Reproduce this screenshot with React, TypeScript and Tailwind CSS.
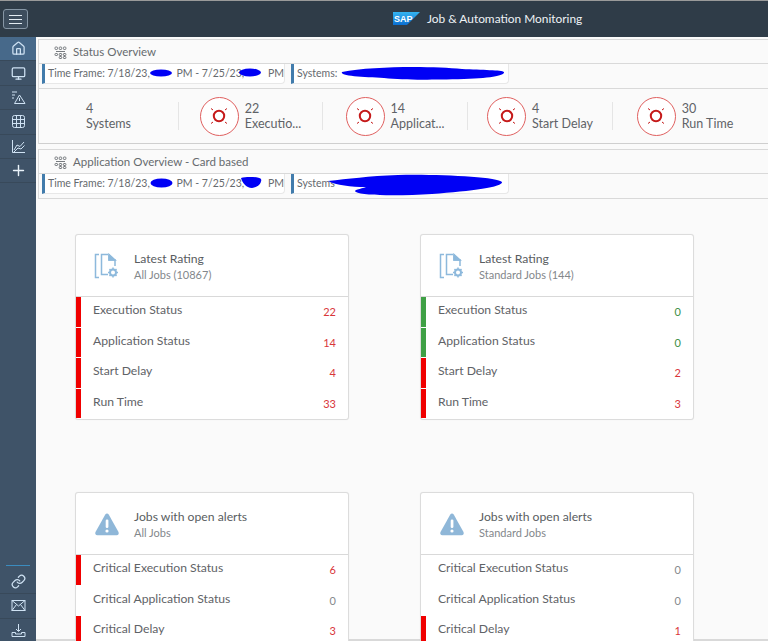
import { Home, Monitor, Plus, Link } from "lucide-react";

type Row = { label: string; value: number; status: "red" | "green" | "none" };

const ratingAll: Row[] = [
  { label: "Execution Status", value: 22, status: "red" },
  { label: "Application Status", value: 14, status: "red" },
  { label: "Start Delay", value: 4, status: "red" },
  { label: "Run Time", value: 33, status: "red" },
];
const ratingStandard: Row[] = [
  { label: "Execution Status", value: 0, status: "green" },
  { label: "Application Status", value: 0, status: "green" },
  { label: "Start Delay", value: 2, status: "red" },
  { label: "Run Time", value: 3, status: "red" },
];
const alertsAll: Row[] = [
  { label: "Critical Execution Status", value: 6, status: "red" },
  { label: "Critical Application Status", value: 0, status: "none" },
  { label: "Critical Delay", value: 3, status: "red" },
];
const alertsStandard: Row[] = [
  { label: "Critical Execution Status", value: 0, status: "none" },
  { label: "Critical Application Status", value: 0, status: "none" },
  { label: "Critical Delay", value: 1, status: "red" },
];

function GroupIcon() {
  return (
    <svg width="13" height="13" viewBox="0 0 13 13" fill="none" stroke="#777b7f" strokeWidth="1" className="shrink-0">
      <rect x="1" y="1" width="2.500" height="2.500" rx=".8" />
      <rect x="5.200" y="1" width="2.500" height="2.500" rx=".8" />
      <rect x="9.400" y="1" width="2.500" height="2.500" rx=".8" />
      <path d="M2 5.500h9" />
      <rect x="1" y="7.500" width="2.500" height="2" rx=".6" />
      <rect x="5.200" y="7.500" width="2.500" height="2" rx=".6" />
      <rect x="9.400" y="7.500" width="2.500" height="2" rx=".6" />
      <rect x="5.200" y="10.500" width="2.500" height="2" rx=".6" />
      <rect x="9.400" y="10.500" width="2.500" height="2" rx=".6" />
    </svg>
  );
}

function TargetIcon() {
  return (
    <div className="flex h-[39px] w-[39px] shrink-0 items-center justify-center rounded-full border border-[#e0605f] bg-white">
      <svg width="18" height="18" viewBox="0 0 18 18" fill="none" stroke="#c51a1a">
        <circle cx="9" cy="9" r="5.200" strokeWidth="2" />
        <path d="M1 1.500 3 3M17 1.500 15 3M1 16.500 3 15M17 16.500 15 15" strokeWidth="1" />
      </svg>
    </div>
  );
}

function Kpi({ value, label, alert }: { value: number; label: string; alert?: boolean }) {
  return (
    <div className="flex items-center justify-center gap-[6px]">
      {alert && <TargetIcon />}
      <div className="flex flex-col text-[12.500px] leading-[15px] text-[#5f6367]">
        <span>{value}</span>
        <span className="whitespace-nowrap">{label}</span>
      </div>
    </div>
  );
}

function Chips({ second }: { second: string }) {
  return (
    <div className="flex h-[25px] gap-[6px] border-b border-[#d9d9d9] pl-[3px]">
      <div className="flex h-[20px] w-[243px] items-center rounded-br-sm border-b border-r border-[#e8e8e8] border-l-[3px] border-l-[#427cac] bg-white pl-[3px] text-[10.500px] whitespace-nowrap text-[#666a6e]">
        <span>Time Frame: 7/18/23,</span>
        <span className="w-[27px]" />
        <span>PM - 7/25/23,</span>
        <span className="w-[24px]" />
        <span>PM</span>
      </div>
      <div className="flex h-[20px] w-[218px] items-center rounded-br-sm border-b border-r border-[#e8e8e8] border-l-[3px] border-l-[#427cac] bg-white pl-[3px] text-[10.500px] text-[#666a6e]">
        {second}
      </div>
    </div>
  );
}

function Title({ text }: { text: string }) {
  return (
    <div className="flex h-[24px] items-center gap-[6px] border-b border-[#d9d9d9] pt-[1px] pl-[15px] text-[11.500px] text-[#666a6e]">
      <GroupIcon />
      <span>{text}</span>
    </div>
  );
}

function DocIcon() {
  return (
    <svg width="26" height="26" viewBox="0 0 26 26" fill="none" stroke="#8db9dc" strokeWidth="1.500" className="shrink-0">
      <path d="M5 1.500H1.500V24.500H5" />
      <path d="M14 1.500H7.500V21.500H14" />
      <path d="M15 1.500V7H21V13" />
      <path d="M15 1.500 21 7H15Z" fill="#8db9dc" />
      <circle cx="19" cy="19.500" r="3" strokeWidth="2" />
      <path d="M19 14.500V16M19 23V24.500M14 19.500H15.500M22.500 19.500H24M15.500 16 16.500 17M21.500 22 22.500 23M22.500 16 21.500 17M16.500 22 15.500 23" />
    </svg>
  );
}

function AlertIcon() {
  return (
    <svg width="26" height="24" viewBox="0 0 26 24" className="shrink-0">
      <path d="M13 1.500c.7 0 1.300.4 1.700 1l9.800 17.600c.8 1.500-.2 3.200-1.800 3.200H3.300c-1.600 0-2.600-1.700-1.800-3.200L11.300 2.500c.4-.6 1-1 1.700-1Z" fill="#8fb7d8" />
      <rect x="11.700" y="7.500" width="2.700" height="8.500" rx="1.200" fill="#fff" />
      <circle cx="13" cy="19" r="1.600" fill="#fff" />
    </svg>
  );
}

function Card({ icon, title, sub, rows }: { icon: React.ReactNode; title: string; sub: string; rows: Row[] }) {
  return (
    <div className="rounded-[3px] border border-[#dcdcdc] bg-white shadow-[0_0_1px_rgba(0,0,0,0.1)]">
      <div className="flex h-[62px] items-center gap-[14px] border-b border-[#d9d9d9] pl-[18px]">
        <div className="flex w-[26px] justify-center">{icon}</div>
        <div className="flex flex-col">
          <span className="text-[12.200px] leading-[17px] text-[#595d61]">{title}</span>
          <span className="mt-[1px] text-[11px] leading-[14px] text-[#83878b]">{sub}</span>
        </div>
      </div>
      {rows.map((r) => (
        <div key={r.label} className="flex h-[30.500px]">
          <div
            className={
              "mb-[1px] w-[5px] shrink-0 " +
              (r.status === "red" ? "bg-[#f00000]" : r.status === "green" ? "bg-[#3fa045]" : "")
            }
          />
          <div className="flex flex-1 justify-between px-[12px]">
            <span className="mt-[4px] text-[12.200px] leading-[17px] text-[#5f6367]">{r.label}</span>
            <span
              className={
                "mt-[6px] text-[11px] leading-[17px] " +
                (r.status === "red" ? "text-[#d9363a]" : r.status === "green" ? "text-[#3f8f45]" : "text-[#85898d]")
              }
            >
              {r.value}
            </span>
          </div>
        </div>
      ))}
    </div>
  );
}

function NavIcon({ children, active }: { children: React.ReactNode; active?: boolean }) {
  return (
    <div className={"flex h-[24.400px] items-center justify-center border-b border-[#38495a] " + (active ? "bg-[#47698a]" : "")}>
      {children}
    </div>
  );
}

export default function App() {
  const navIcon = "h-[15px] w-[15px] text-[#cfe2f3]";
  return (
    <div className="relative flex h-[641px] w-[768px] flex-col overflow-hidden bg-[#fafafa] font-['Lato',sans-serif]">
      <header className="relative flex h-[37px] shrink-0 items-center border-t border-[#9a9a9a] bg-[#2f3c48] pl-[3px]">
        <button className="flex h-[20px] w-[25px] flex-col items-center justify-center gap-[3px] rounded-[3px] border border-[#8696a5] bg-[#3d4d5d]">
          <span className="h-[1px] w-[13px] bg-[#e3ecf3]" />
          <span className="h-[1px] w-[13px] bg-[#e3ecf3]" />
          <span className="h-[1px] w-[13px] bg-[#e3ecf3]" />
        </button>
        <div className="ml-[365px] flex items-center gap-[7px]">
          <svg width="27" height="13" viewBox="0 0 27 13">
            <defs>
              <linearGradient id="sapBlue" x1="0" y1="0" x2="0" y2="1">
                <stop offset="0" stopColor="#35b4f0" />
                <stop offset="1" stopColor="#0a6ed1" />
              </linearGradient>
            </defs>
            <path d="M0 0H27L14 13H0Z" fill="url(#sapBlue)" />
            <text x="1" y="9.500" fontSize="9" fontWeight="700" fontFamily="Liberation Sans" fill="#fff">SAP</text>
          </svg>
          <span className="text-[11.900px] text-[#eef2f5]">Job &amp; Automation Monitoring</span>
        </div>
      </header>

      <div className="flex min-h-0 flex-1">
        <aside className="flex w-[36px] shrink-0 flex-col justify-between bg-[#3f5368]">
          <nav>
            <NavIcon active><Home className={navIcon} /></NavIcon>
            <NavIcon><Monitor className={navIcon} /></NavIcon>
            <NavIcon>
              <svg width="15" height="15" viewBox="0 0 15 15" fill="none" stroke="#cfe2f3">
                <path d="M1 2h5M1 5h3M1 8h2" />
                <path d="M8.500 5 14 13.500H3.500Z" />
                <path d="M8.500 8v3" />
              </svg>
            </NavIcon>
            <NavIcon>
              <svg width="15" height="15" viewBox="0 0 15 15" fill="none" stroke="#cfe2f3">
                <rect x="1.500" y="1.500" width="12" height="12" rx="2" />
                <path d="M1.500 5.500h12M1.500 9.500h12M5.500 1.500v12M9.500 1.500v12" />
              </svg>
            </NavIcon>
            <NavIcon>
              <svg width="15" height="15" viewBox="0 0 15 15" fill="none" stroke="#cfe2f3">
                <path d="M1.500 1v12.500H14" />
                <path d="M3 11 6 6l3 1.500L13 3M3 13l4-4 3 1 3.500-3.500" />
              </svg>
            </NavIcon>
            <NavIcon><Plus className="h-[17px] w-[17px] text-[#eaf3fa]" /></NavIcon>
          </nav>
          <div className="-mb-[2px]">
            <div className="mx-[6px] h-[1px] bg-[#3b8cbf]" />
            <div className="mt-[4px]">
              <NavIcon><Link className={navIcon} /></NavIcon>
              <NavIcon>
                <svg width="15" height="13" viewBox="0 0 15 13" fill="none" stroke="#cfe2f3">
                  <rect x="1" y="1.500" width="13" height="10" />
                  <path d="M1 1.500 7.500 7 14 1.500M1 11.500 5.500 5.500M14 11.500 9.500 5.500" />
                </svg>
              </NavIcon>
              <NavIcon>
                <svg width="15" height="15" viewBox="0 0 15 15" fill="none" stroke="#cfe2f3">
                  <path d="M7.500 1v7M5 6l2.500 2.500L10 6" />
                  <path d="M1 9.500h3.500v1.500h6V9.500H14v4H1Z" />
                </svg>
              </NavIcon>
            </div>
          </div>
        </aside>

        <main className="min-w-0 flex-1 border-b-2 border-[#d9d9d9] pt-[2px] pl-[2px]">
          <section className="border-t border-l border-[#d9d9d9]">
            <Title text="Status Overview" />
            <Chips second="Systems:" />
            <div className="grid h-[55px] grid-cols-[140px_144px_145px_145px_144px] items-center border-b border-[#cfcfcf] bg-[#fafafa]">
              <div className="flex h-[28px] items-center justify-center border-r border-[#e5e5e5]"><Kpi value={4} label="Systems" /></div>
              <div className="flex h-[28px] items-center justify-center border-r border-[#e5e5e5]"><Kpi value={22} label="Executio..." alert /></div>
              <div className="flex h-[28px] items-center justify-center border-r border-[#e5e5e5]"><Kpi value={14} label="Applicat..." alert /></div>
              <div className="flex h-[28px] items-center justify-center border-r border-[#e5e5e5]"><Kpi value={4} label="Start Delay" alert /></div>
              <Kpi value={30} label="Run Time" alert />
            </div>
          </section>
          <section className="mt-[5px] border-t border-l border-[#d9d9d9]">
            <Title text="Application Overview - Card based" />
            <Chips second="Systems" />
          </section>
          <div className="grid grid-cols-[274px_274px] gap-x-[71px] gap-y-[72px] pt-[35px] pl-[37px]">
            <Card icon={<DocIcon />} title="Latest Rating" sub="All Jobs (10867)" rows={ratingAll} />
            <Card icon={<DocIcon />} title="Latest Rating" sub="Standard Jobs (144)" rows={ratingStandard} />
            <Card icon={<AlertIcon />} title="Jobs with open alerts" sub="All Jobs" rows={alertsAll} />
            <Card icon={<AlertIcon />} title="Jobs with open alerts" sub="Standard Jobs" rows={alertsStandard} />
          </div>
        </main>
      </div>

      {/* redaction scribbles sitting over the chips */}
      <svg className="pointer-events-none absolute top-0 left-0" width="768" height="641" fill="#0000f5">
        <ellipse cx="161" cy="73" rx="11" ry="3.500" />
        <ellipse cx="250" cy="72.500" rx="11" ry="4" />
        <path d="M342 72c30-6 90-6 120-3 20 1 40 1 42 3 1 3-10 6-40 7-40 1-60 1-80-1-20-1-45-2-42-6Z" />
        <ellipse cx="161.500" cy="183" rx="11" ry="4.500" />
        <path d="M241 178c6-2 18-1 20 1 1 3-2 8-9 9-6 0-10-6-11-10Z" />
        <path d="M328 181c20-2 40-5 70-6 40-1 100 2 104 7 1 5-30 9-70 12-30 2-70 2-76-2-4-2 5-3 10-5-15 0-30-2-38-6Z" />
      </svg>
    </div>
  );
}
